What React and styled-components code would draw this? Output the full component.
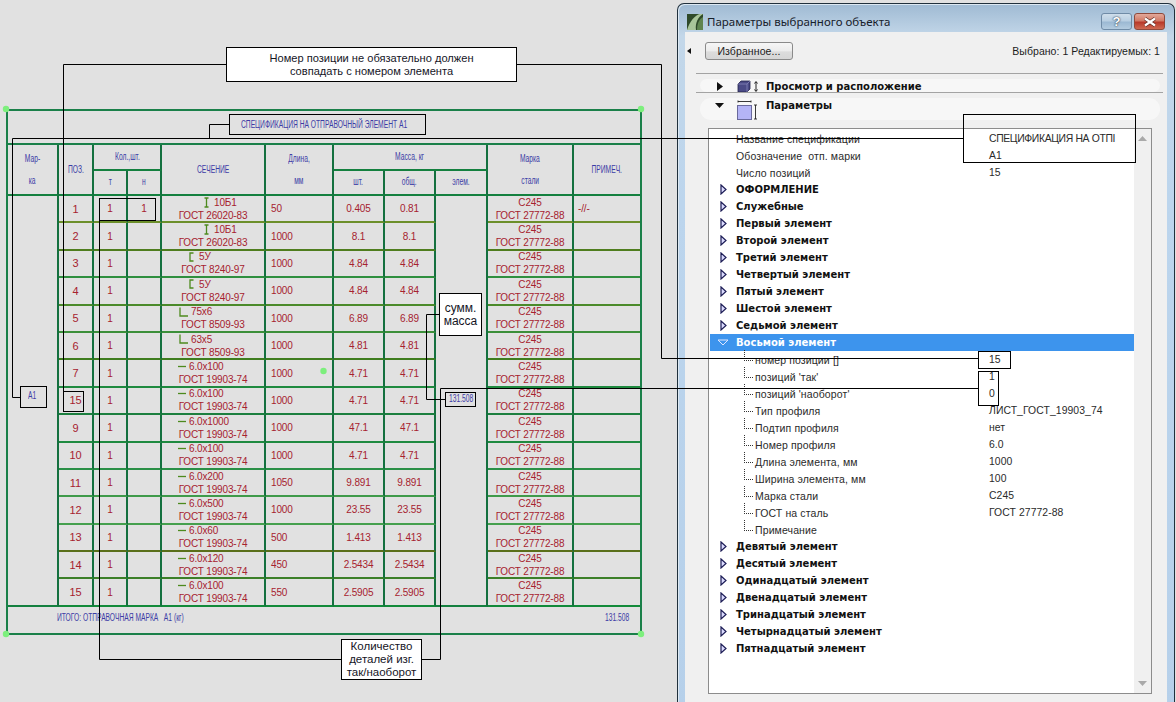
import React from "react";
import styled, { createGlobalStyle } from "styled-components";

const Global = createGlobalStyle`
  html, body { margin: 0; padding: 0; background: #e1e1e1; overflow: hidden; }
  * { box-sizing: border-box; }
`;

const Page = styled.div`
  position: relative;
  width: 1176px;
  height: 702px;
  overflow: hidden;
  display: flex;
  align-items: flex-start;
  background: #e1e1e1;
  font-family: "Liberation Sans", Arial, sans-serif;
`;

/* ---------- drawing sheet ---------- */
const Canvas = styled.div`
  flex: 0 0 677px;
  padding: 109px 0 0 6px;
`;
const Sheet = styled.div`
  width: 636px;
  height: 526px;
  border: 2px solid #1a8049;
  display: flex;
  flex-direction: column;
`;
const CadText = styled.span`
  display: inline-block;
  font-family: "Liberation Sans", sans-serif;
  font-size: 10px;
  color: #3c3ca6;
  white-space: nowrap;
  transform: scaleX(0.67);
  transform-origin: ${(p) => p.$origin || "center"};
`;
const TitleStrip = styled.div`
  flex: 0 0 34px;
  border-bottom: 2px solid #1a8049;
  display: flex;
  align-items: center;
  padding: 0 0 6px 233px;
`;
const Grid = styled.div`
  display: grid;
  grid-template-columns: 51px 35px 34px 34px 104px 68px 51px 51px 52px 86px 66px;
  grid-template-rows: 25.5px 25.5px repeat(15, 27.4px);
  flex: 0 0 462px;
`;
const HeadCell = styled.div`
  grid-column: span ${(p) => p.$cols || 1};
  grid-row: span ${(p) => p.$rows || 1};
  border-right: ${(p) => (p.$last ? "none" : "2px solid #14703f")};
  border-bottom: 2px solid #14803f;
  display: flex;
  flex-direction: column;
  align-items: center;
  justify-content: center;
  line-height: ${(p) => (p.$tall ? 22 : 12)}px;
`;
const SpanCell = styled.div`
  grid-row: span 15;
  border-right: 2px solid #14703f;
  border-bottom: 2px solid #14803f;
  display: flex;
  align-items: center;
  justify-content: center;
  padding-bottom: ${(p) => p.$lift || 0}px;
`;
const Cell = styled.div`
  border-right: ${(p) => (p.$last ? "none" : "2px solid #14703f")};
  border-bottom: 2px solid ${(p) => p.$line};
  display: flex;
  align-items: center;
  justify-content: ${(p) => (p.$left ? "flex-start" : "center")};
  padding-left: ${(p) => p.$pad || 0}px;
  font-size: 10px;
  letter-spacing: -0.15px;
  color: #a6222f;
  min-width: 0;
  overflow: hidden;
  white-space: nowrap;
`;
const PosCell = styled(Cell)`
  font-size: 11px;
  letter-spacing: 0;
`;
const TwoLines = styled.div`
  display: flex;
  flex-direction: column;
  width: 100%;
  line-height: 13px;
  font-size: 10px;
  text-align: center;
`;
const FirstLine = styled.div`
  display: flex;
  align-items: center;
  height: 13px;
  padding-left: ${(p) => p.$indent}px;
  gap: ${(p) => p.$gap}px;
`;
const Footer = styled.div`
  flex: 1;
  display: flex;
  justify-content: space-between;
  align-items: center;
  padding: 0 11px 5px 49px;
`;

const sectionShapes = {
  I: { indent: 42, gap: 5, w: 5, h: 11, d: "M0.5 1H4.5M2.5 1V10M0.5 10H4.5" },
  C: { indent: 27, gap: 5, w: 5, h: 10, d: "M4.5 1H1V9H4.5" },
  L: { indent: 17, gap: 3, w: 9, h: 10, d: "M1 0.5V9H9" },
  P: { indent: 16, gap: 3, w: 8, h: 3, d: "M0 1.5H8" },
};

const SectionIcon = ({ kind }) => {
  const s = sectionShapes[kind];
  return (
    <svg width={s.w} height={s.h} viewBox={`0 0 ${s.w} ${s.h}`} style={{ flex: "none" }}>
      <path d={s.d} fill="none" stroke="#4d8a1e" strokeWidth="1.3" />
    </svg>
  );
};

const rows = [
  ["1", "1", "1", "I", "10Б1", "ГОСТ 26020-83", "50", "0.405", "0.81", "-//-"],
  ["2", "1", "", "I", "10Б1", "ГОСТ 26020-83", "1000", "8.1", "8.1", ""],
  ["3", "1", "", "C", "5У", "ГОСТ 8240-97", "1000", "4.84", "4.84", ""],
  ["4", "1", "", "C", "5У", "ГОСТ 8240-97", "1000", "4.84", "4.84", ""],
  ["5", "1", "", "L", "75x6", "ГОСТ 8509-93", "1000", "6.89", "6.89", ""],
  ["6", "1", "", "L", "63x5", "ГОСТ 8509-93", "1000", "4.81", "4.81", ""],
  ["7", "1", "", "P", "6.0x100", "ГОСТ 19903-74", "1000", "4.71", "4.71", ""],
  ["15", "1", "", "P", "6.0x100", "ГОСТ 19903-74", "1000", "4.71", "4.71", ""],
  ["9", "1", "", "P", "6.0x1000", "ГОСТ 19903-74", "1000", "47.1", "47.1", ""],
  ["10", "1", "", "P", "6.0x100", "ГОСТ 19903-74", "1000", "4.71", "4.71", ""],
  ["11", "1", "", "P", "6.0x200", "ГОСТ 19903-74", "1050", "9.891", "9.891", ""],
  ["12", "1", "", "P", "6.0x500", "ГОСТ 19903-74", "1000", "23.55", "23.55", ""],
  ["13", "1", "", "P", "6.0x60", "ГОСТ 19903-74", "500", "1.413", "1.413", ""],
  ["14", "1", "", "P", "6.0x120", "ГОСТ 19903-74", "450", "2.5434", "2.5434", ""],
  ["15", "1", "", "P", "6.0x100", "ГОСТ 19903-74", "550", "2.5905", "2.5905", ""],
];
const lineTones = ["#6c8f2b", "#4f7d1e", "#2f8f3f", "#4b8a2a", "#3c8f3a", "#3f7d1e", "#1f8a3f", "#1c7f3f", "#1f8a40", "#2a8f46", "#3f9a4a", "#45a04e", "#5a6f1a", "#3c7f28", "#128a3a"];

const SpecRow = ({ r, i, children }) => {
  const line = lineTones[i];
  const s = sectionShapes[r[3]];
  return (
    <>
      <PosCell $line={line}>{r[0]}</PosCell>
      <Cell $line={line}>{r[1]}</Cell>
      <Cell $line={line}>{r[2]}</Cell>
      <Cell $line={line}>
        <TwoLines>
          <FirstLine $indent={s.indent} $gap={s.gap}>
            <SectionIcon kind={r[3]} />
            {r[4]}
          </FirstLine>
          <div>{r[5]}</div>
        </TwoLines>
      </Cell>
      <Cell $line={line} $left $pad={5}>{r[6]}</Cell>
      <Cell $line={line}>{r[7]}</Cell>
      <Cell $line={line}>{r[8]}</Cell>
      {children}
      <Cell $line={line}>
        <TwoLines>
          <div>C245</div>
          <div>ГОСТ 27772-88</div>
        </TwoLines>
      </Cell>
      <Cell $line={line} $left $pad={4} $last>{r[9]}</Cell>
    </>
  );
};

const SpecSheet = () => (
  <Sheet>
    <TitleStrip>
      <CadText $origin="left">СПЕЦИФИКАЦИЯ НА ОТПРАВОЧНЫЙ ЭЛЕМЕНТ А1</CadText>
    </TitleStrip>
    <Grid>
      <HeadCell $rows={2} $tall>
        <CadText>Мар-</CadText>
        <CadText>ка</CadText>
      </HeadCell>
      <HeadCell $rows={2}><CadText>ПОЗ.</CadText></HeadCell>
      <HeadCell $cols={2}><CadText>Кол.,шт.</CadText></HeadCell>
      <HeadCell $rows={2}><CadText>СЕЧЕНИЕ</CadText></HeadCell>
      <HeadCell $rows={2} $tall>
        <CadText>Длина,</CadText>
        <CadText>мм</CadText>
      </HeadCell>
      <HeadCell $cols={3}><CadText>Масса, кг</CadText></HeadCell>
      <HeadCell $rows={2} $tall>
        <CadText>Марка</CadText>
        <CadText>стали</CadText>
      </HeadCell>
      <HeadCell $rows={2} $last><CadText>ПРИМЕЧ.</CadText></HeadCell>
      <HeadCell><CadText>т</CadText></HeadCell>
      <HeadCell><CadText>н</CadText></HeadCell>
      <HeadCell><CadText>шт.</CadText></HeadCell>
      <HeadCell><CadText>общ.</CadText></HeadCell>
      <HeadCell><CadText>элем.</CadText></HeadCell>

      <SpanCell $lift={10}><CadText>А1</CadText></SpanCell>
      {rows.map((r, i) => (
        <SpecRow key={i} r={r} i={i}>
          {i === 0 && (
            <SpanCell $lift={4}><CadText>131.508</CadText></SpanCell>
          )}
        </SpecRow>
      ))}
    </Grid>
    <Footer>
      <CadText $origin="left">ИТОГО: ОТПРАВОЧНАЯ МАРКА&nbsp;&nbsp;&nbsp;А1 (кг)</CadText>
      <CadText $origin="right">131.508</CadText>
    </Footer>
  </Sheet>
);

/* ---------- dialog window ---------- */
const Win = styled.div`
  flex: 0 0 498px;
  height: 720px;
  margin-top: 3px;
  border: 1px solid #20303c;
  border-bottom: none;
  border-radius: 7px 7px 0 0;
  background: linear-gradient(180deg, #9fbad3 0, #c3d7e9 32px, #bcd5ed 200px, #b6d0ea 100%);
  box-shadow: inset 1px 1px 0 #dce8f2;
  display: flex;
  flex-direction: column;
`;
const TitleBar = styled.div`
  flex: 0 0 28px;
  display: flex;
  align-items: center;
  padding: 7px 9px 0 9px;
`;
const TitleText = styled.span`
  margin-left: 4px;
  font-family: "Noto Sans", sans-serif;
  font-size: 11.5px;
  color: #17202a;
  flex: 1;
`;
const CaptionBtn = styled.div`
  width: ${(p) => p.$w}px;
  height: 17px;
  margin-left: ${(p) => (p.$close ? 2 : 0)}px;
  border: 1px solid ${(p) => (p.$close ? "#8f4a3c" : "#6f8ba6")};
  border-radius: 3px;
  background: ${(p) =>
    p.$close
      ? "linear-gradient(180deg,#e3a99b 0,#d27a66 45%,#b8392a 55%,#cf6a52 100%)"
      : "linear-gradient(180deg,#cfdeeb 0,#b9cfe2 45%,#9cb9d3 55%,#b4cce0 100%)"};
  display: flex;
  align-items: center;
  justify-content: center;
`;
const HelpMark = styled.span`
  font-family: "Liberation Sans", sans-serif;
  font-weight: bold;
  font-size: 13px;
  color: #fff;
  text-shadow: 0 0 2px #2d3f50, 0 0 1px #2d3f50;
  line-height: 1;
`;
const Body = styled.div`
  flex: 1;
  margin: 0 7px;
  background: #f0f0f0;
  padding: 10px 4px 0 11px;
  display: flex;
  flex-direction: column;
`;
const TopRow = styled.div`
  height: 18px;
  margin-left: -9px;
  margin-right: 3px;
  display: flex;
  align-items: center;
  justify-content: space-between;
`;
const FavLeft = styled.div`
  display: flex;
  align-items: center;
`;
const FavButton = styled.div`
  margin-left: 14px;
  width: 88px;
  height: 18px;
  border: 1px solid #8a8a8a;
  border-radius: 3px;
  background: linear-gradient(180deg, #f6f6f6 0, #ececec 50%, #dcdcdc 55%, #d6d6d6 100%);
  font-size: 10.5px;
  letter-spacing: 0.1px;
  color: #1c1c1c;
  display: flex;
  align-items: center;
  justify-content: center;
`;
const SmallText = styled.span`
  font-size: 10.5px;
  letter-spacing: 0.05px;
  color: #1c1c1c;
`;
const Divider = styled.div`
  height: 1px;
  flex: none;
  background: #a3a3a3;
  margin-top: ${(p) => p.$top || 0}px;
`;
const Pill = styled.div`
  flex: none;
  height: ${(p) => p.$h}px;
  margin: 5px 3px 0 4px;
  background: #f7f7f7;
  border-radius: ${(p) => p.$h}px;
  display: flex;
  align-items: ${(p) => (p.$top ? "flex-start" : "center")};
  padding-top: ${(p) => (p.$top ? 2 : 1)}px;
`;
const PillTwisty = styled.div`
  width: 36px;
  padding-left: ${(p) => p.$pad}px;
  display: flex;
  padding-top: ${(p) => (p.$top ? 3 : 0)}px;
`;
const PillIcon = styled.div`
  width: 30px;
  display: flex;
  padding-left: 1px;
`;
const BoldText = styled.span`
  font-family: "DejaVu Sans", sans-serif;
  font-weight: bold;
  font-size: 10px;
  color: ${(p) => p.$color || "#111"};
  white-space: nowrap;
`;
const ListBox = styled.div`
  flex: none;
  height: 566px;
  margin: 8px 11px 0 12px;
  border: 1px solid #8c8c8c;
  background: #fff;
  display: flex;
`;
const Rows = styled.div`
  flex: 1;
  padding-top: 1px;
  min-width: 0;
`;
const Row = styled.div`
  height: 17px;
  display: flex;
  align-items: center;
  margin-left: 1px;
  background: ${(p) => (p.$active ? "#3d94ed" : "transparent")};
`;
const Twisty = styled.div`
  width: 26px;
  padding-left: 10px;
  display: flex;
`;
const Label = styled.span`
  width: 279px;
  padding-left: ${(p) => p.$pad || 0}px;
  font-size: 10.5px;
  letter-spacing: 0.12px;
  color: #2a2a2a;
  white-space: pre;
`;
const ChildLabel = styled(Label)`
  width: 234px;
`;
const TreeMark = styled.span`
  flex: none;
  width: 9px;
  height: 11px;
  margin: -8px 2px 0 34px;
  border-left: 1px dotted #333;
  border-bottom: 1px dotted #333;
`;
const Value = styled.span`
  font-size: 10.4px;
  letter-spacing: ${(p) => (p.$tight ? -0.35 : 0.08)}px;
  color: #2a2a2a;
  white-space: nowrap;
`;
const Scroll = styled.div`
  flex: 0 0 17px;
  background: #f0f0f0;
  display: flex;
  flex-direction: column;
  justify-content: space-between;
  align-items: center;
  padding: 7px 0;
`;

const ClosedTri = () => (
  <svg width="7" height="11" viewBox="0 0 7 11">
    <path d="M1 1L6 5.5L1 10Z" fill="#dcdcff" stroke="#1b1b55" strokeWidth="1.2" />
  </svg>
);
const OpenTri = () => (
  <svg width="12" height="7" viewBox="0 0 12 7" style={{ marginLeft: -3 }}>
    <path d="M1 1H11L6 6Z" fill="#3d94ed" stroke="#dfe6ff" strokeWidth="1" />
  </svg>
);
const ScrollArrow = ({ down }) => (
  <svg width="9" height="5" viewBox="0 0 9 5">
    <path d={down ? "M0 0H9L4.5 5Z" : "M0 5H9L4.5 0Z"} fill="#a9a9a9" />
  </svg>
);

const Group = ({ name }) => (
  <Row>
    <Twisty><ClosedTri /></Twisty>
    <BoldText>{name}</BoldText>
  </Row>
);
const Param = ({ name, value, tight }) => (
  <Row>
    <Label $pad={26}>{name}</Label>
    <Value $tight={tight}>{value}</Value>
  </Row>
);
const Child = ({ name, value }) => (
  <Row>
    <TreeMark />
    <ChildLabel>{name}</ChildLabel>
    <Value>{value}</Value>
  </Row>
);

const before = ["ОФОРМЛЕНИЕ", "Служебные", "Первый элемент", "Второй элемент", "Третий элемент", "Четвертый элемент", "Пятый элемент", "Шестой элемент", "Седьмой элемент"];
const after = ["Девятый элемент", "Десятый элемент", "Одинадцатый элемент", "Двенадцатый элемент", "Тринадцатый элемент", "Четырнадцатый элемент", "Пятнадцатый элемент"];
const children = [
  ["номер позиции []", "15"],
  ["позиций 'так'", "1"],
  ["позиций 'наоборот'", "0"],
  ["Тип профиля", "ЛИСТ_ГОСТ_19903_74"],
  ["Подтип профиля", "нет"],
  ["Номер профиля", "6.0"],
  ["Длина элемента, мм", "1000"],
  ["Ширина элемента, мм", "100"],
  ["Марка стали", "C245"],
  ["ГОСТ на сталь", "ГОСТ 27772-88"],
  ["Примечание", ""],
];

const Dialog = () => (
  <Win>
    <TitleBar>
      <svg width="16" height="16" viewBox="0 0 16 16" style={{ flex: "none" }}>
        <rect width="16" height="16" fill="#2f4a2a" />
        <path d="M0 16C3 7 8 1 13 0L16 0C11 3 8 9 9 16Z" fill="#a9c59a" />
        <path d="M10 16C10 10 12 5 16 3V16Z" fill="#5f8450" />
      </svg>
      <TitleText>Параметры выбранного объекта</TitleText>
      <CaptionBtn $w={31}><HelpMark>?</HelpMark></CaptionBtn>
      <CaptionBtn $w={31} $close>
        <svg width="14" height="10" viewBox="0 0 14 10">
          <path d="M2 1.5L12 8.5M12 1.5L2 8.5" stroke="#5a2a22" strokeWidth="3.4" />
          <path d="M2 1.5L12 8.5M12 1.5L2 8.5" stroke="#fff" strokeWidth="2.2" />
        </svg>
      </CaptionBtn>
    </TitleBar>
    <Body>
      <TopRow>
        <FavLeft>
          <svg width="4" height="6" viewBox="0 0 4 6">
            <path d="M4 0V6L0 3Z" fill="#111" />
          </svg>
          <FavButton>Избранное...</FavButton>
        </FavLeft>
        <SmallText>Выбрано: 1 Редактируемых: 1</SmallText>
      </TopRow>
      <Divider $top={13} />
      <Pill $h={13}>
        <PillTwisty $pad={17}>
          <svg width="6" height="9" viewBox="0 0 6 9"><path d="M0 0L6 4.5L0 9Z" fill="#111" /></svg>
        </PillTwisty>
        <PillIcon>
          <svg width="22" height="13" viewBox="0 0 22 13">
            <path d="M1 4L4 1H13V9L10 12H1Z" fill="#4a4a86" stroke="#22224a" strokeWidth="0.8" />
            <path d="M1 4H10V12M10 4L13 1" fill="none" stroke="#8c8cc0" strokeWidth="0.7" />
            <path d="M19 2V11M17.5 3.5L19 1.5L20.5 3.5M17.5 9.5L19 11.5L20.5 9.5" fill="none" stroke="#222" strokeWidth="1" />
          </svg>
        </PillIcon>
        <BoldText>Просмотр и расположение</BoldText>
      </Pill>
      <Divider />
      <Pill $h={22} $top>
        <PillTwisty $pad={15} $top>
          <svg width="9" height="5" viewBox="0 0 9 5"><path d="M0 0H9L4.5 5Z" fill="#111" /></svg>
        </PillTwisty>
        <PillIcon>
          <svg width="21" height="20" viewBox="0 0 21 20">
            <path d="M1 0.5V2.5M14 0.5V2.5M1 1.5H14" fill="none" stroke="#222" strokeWidth="0.9" />
            <rect x="0.5" y="5.5" width="14" height="14" fill="#b4b4f6" stroke="#6a6a9c" />
            <path d="M18.5 5V19M17 5H20M17 19H20" fill="none" stroke="#222" strokeWidth="0.9" />
          </svg>
        </PillIcon>
        <BoldText>Параметры</BoldText>
      </Pill>
      <ListBox>
        <Rows>
          <Param name="Название спецификации" value="СПЕЦИФИКАЦИЯ НА ОТПI" tight />
          <Param name="Обозначение  отп. марки" value="А1" />
          <Param name="Число позиций" value="15" />
          {before.map((n) => <Group key={n} name={n} />)}
          <Row $active>
            <Twisty><OpenTri /></Twisty>
            <BoldText $color="#fff">Восьмой элемент</BoldText>
          </Row>
          {children.map(([n, v]) => <Child key={n} name={n} value={v} />)}
          {after.map((n) => <Group key={n} name={n} />)}
        </Rows>
        <Scroll>
          <ScrollArrow />
          <ScrollArrow down />
        </Scroll>
      </ListBox>
    </Body>
  </Win>
);

/* ---------- annotations laid over the page ---------- */
const Callout = styled.div`
  position: absolute;
  left: ${(p) => p.$x}px;
  top: ${(p) => p.$y}px;
  width: ${(p) => p.$w}px;
  height: ${(p) => p.$h}px;
  border: 1px solid #000;
  background: #fff;
  color: #15151f;
  font-size: ${(p) => p.$size || 12}px;
  line-height: 13px;
  text-align: center;
  display: flex;
  flex-direction: column;
  align-items: center;
  justify-content: center;
`;
const Leaders = styled.svg`
  position: absolute;
  left: 0;
  top: 0;
  pointer-events: none;
`;

const leaderPaths = [
  "M226.5 64.5H63.5V391",
  "M516.5 64.5H661.5V358.5H978",
  "M229.5 124.5H209.5V138.5",
  "M12.5 397.5V138.5H963",
  "M12.5 397.5H20",
  "M99.5 220.5V659.5H342",
  "M421 659.5H440.5V388.5H978",
  "M439 314.5H426.5V399.5H446",
];
const outlines = [
  [229.5, 114.5, 196, 20],
  [20.5, 386.5, 26, 21],
  [63.5, 391.5, 20, 20],
  [99.5, 198.5, 56, 22],
  [445.5, 392.5, 30, 14],
  [963.5, 114.5, 172, 48],
  [978.5, 351.5, 32, 17],
  [978.5, 371.5, 20, 34],
];
const handles = [[6, 109], [641, 109], [6, 634], [641, 634], [323.5, 371]];

const Annotations = () => (
  <>
    <Leaders width="1176" height="702" viewBox="0 0 1176 702">
      {handles.map(([x, y]) => (
        <circle key={x + "-" + y} cx={x} cy={y} r="3.2" fill="#7def7d" />
      ))}
      {leaderPaths.map((d) => (
        <path key={d} d={d} fill="none" stroke="#000" strokeWidth="1" />
      ))}
      {outlines.map(([x, y, w, h]) => (
        <rect key={x + "-" + y} x={x} y={y} width={w} height={h} fill="none" stroke="#000" strokeWidth="1" />
      ))}
    </Leaders>
    <Callout $x={226} $y={47} $w={291} $h={35} $size={11.1}>
      <div>Номер позиции не обязательно должен</div>
      <div>совпадать с номером элемента</div>
    </Callout>
    <Callout $x={439} $y={293} $w={43} $h={43}>
      <div>сумм.</div>
      <div>масса</div>
    </Callout>
    <Callout $x={341} $y={639} $w={81} $h={41} $size={11.5}>
      <div>Количество</div>
      <div>деталей изг.</div>
      <div>так/наоборот</div>
    </Callout>
  </>
);

export default function App() {
  return (
    <Page>
      <Global />
      <Canvas>
        <SpecSheet />
      </Canvas>
      <Dialog />
      <Annotations />
    </Page>
  );
}
